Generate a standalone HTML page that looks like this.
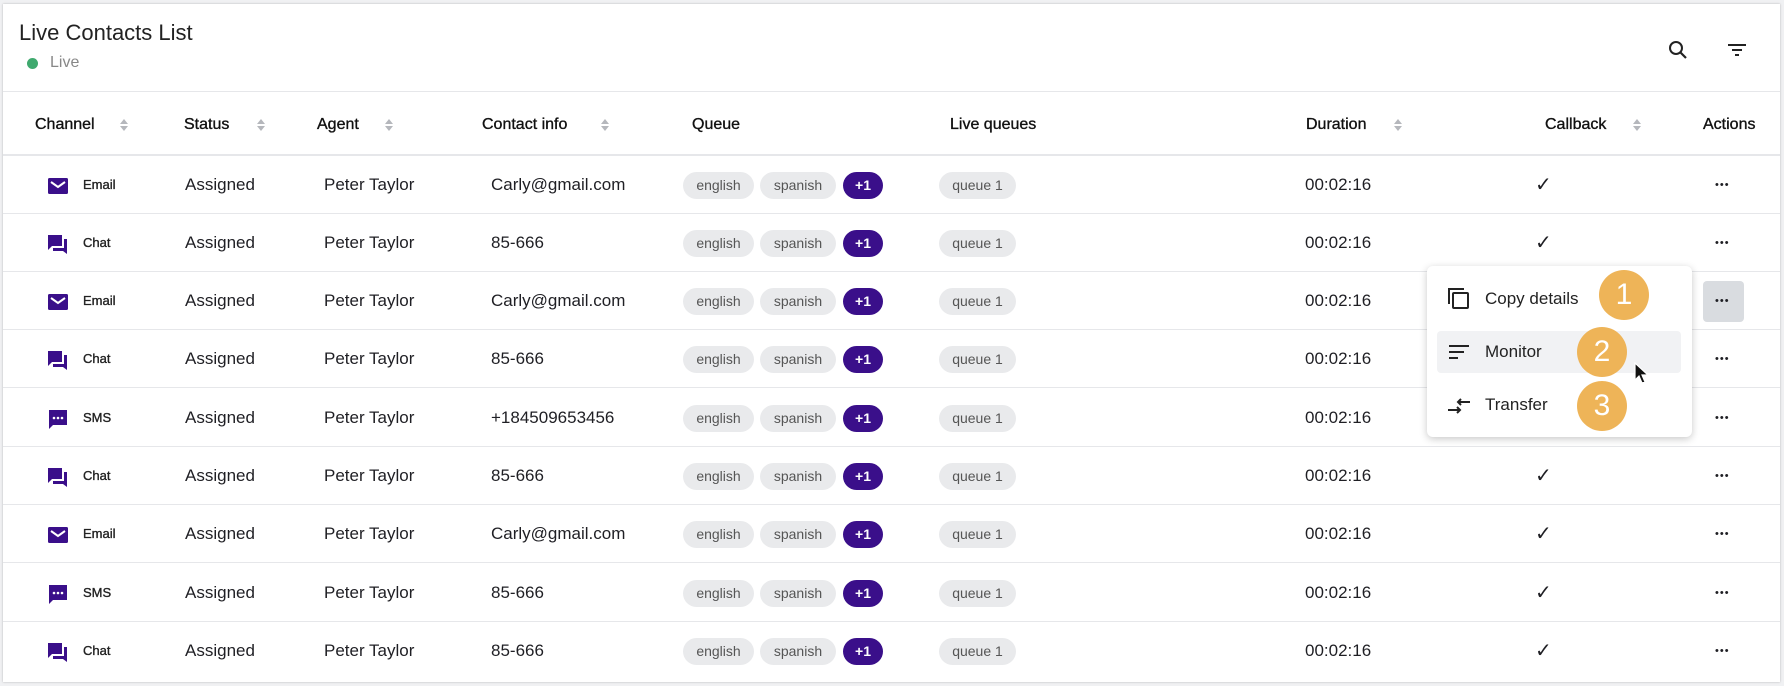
<!DOCTYPE html>
<html><head><meta charset="utf-8"><style>
*{box-sizing:border-box;margin:0;padding:0}
body{width:1784px;height:686px;background:#f0f1f3;font-family:"Liberation Sans",Arial,sans-serif;color:#1f1f24;position:relative;overflow:hidden}
.card{position:absolute;left:3px;top:4px;width:1777px;height:678px;background:#fff;box-shadow:0 0 2px rgba(0,0,0,.25)}
.a{position:absolute;white-space:nowrap}
.hl{position:absolute;left:0;right:0;height:1px;background:#e6e7ea}
.th{position:absolute;top:112px;font-size:16px;color:#111;-webkit-text-stroke:0.35px #111}
.sort{position:absolute;top:114px;width:8px;height:14px}
.row{position:absolute;left:0;width:1777px;height:58px;border-bottom:1px solid #e6e7ea}
.row>div{position:absolute;top:0;line-height:58px;font-size:17px;white-space:nowrap}
.ch{font-size:13px!important;color:#222;-webkit-text-stroke:0.35px #222}
.ic{position:absolute;top:19px!important;width:22px;height:22px}
.chip{top:16px!important;height:27px;line-height:27px!important;border-radius:14px;background:#e9eaec;color:#555;font-size:14px!important;text-align:center}
.plus{background:#3a0f8a;color:#fff;font-weight:bold}
.dots{font-size:11px!important;letter-spacing:1px}
.badge{position:absolute;width:50px;height:50px;border-radius:50%;background:#eeb458;color:#fff;font-size:30px;text-align:center;line-height:50px}
</style></head><body>
<div class="card">
<div class="a" style="left:16px;top:16px;font-size:22px;color:#222">Live Contacts List</div>
<div class="a" style="left:24px;top:54px;width:11px;height:11px;border-radius:50%;background:#3fa96e"></div>
<div class="a" style="left:47px;top:50px;font-size:16px;color:#888">Live</div>
<svg class="a" style="left:1663px;top:34px" width="24" height="24" viewBox="0 0 24 24"><circle cx="10" cy="10" r="6" fill="none" stroke="#222" stroke-width="2"/><path d="M14.5 14.5L20 20" stroke="#222" stroke-width="2.2"/></svg>
<svg class="a" style="left:1722px;top:34px" width="24" height="24" viewBox="0 0 24 24"><path d="M3 7h18M7 12h10M10 17h4" stroke="#222" stroke-width="2"/></svg>
<div class="hl" style="top:87px"></div>
<div class="th" style="left:32px">Channel</div>
<div class="th" style="left:181px">Status</div>
<div class="th" style="left:314px">Agent</div>
<div class="th" style="left:479px">Contact info</div>
<div class="th" style="left:689px">Queue</div>
<div class="th" style="left:947px">Live queues</div>
<div class="th" style="left:1303px">Duration</div>
<div class="th" style="left:1542px">Callback</div>
<div class="th" style="left:1700px">Actions</div>
<svg class="sort" style="left:117px" viewBox="0 0 8 14"><path d="M0 6L4 1L8 6ZM0 8L4 13L8 8Z" fill="#b5b7bc"/></svg>
<svg class="sort" style="left:254px" viewBox="0 0 8 14"><path d="M0 6L4 1L8 6ZM0 8L4 13L8 8Z" fill="#b5b7bc"/></svg>
<svg class="sort" style="left:382px" viewBox="0 0 8 14"><path d="M0 6L4 1L8 6ZM0 8L4 13L8 8Z" fill="#b5b7bc"/></svg>
<svg class="sort" style="left:598px" viewBox="0 0 8 14"><path d="M0 6L4 1L8 6ZM0 8L4 13L8 8Z" fill="#b5b7bc"/></svg>
<svg class="sort" style="left:1391px" viewBox="0 0 8 14"><path d="M0 6L4 1L8 6ZM0 8L4 13L8 8Z" fill="#b5b7bc"/></svg>
<svg class="sort" style="left:1630px" viewBox="0 0 8 14"><path d="M0 6L4 1L8 6ZM0 8L4 13L8 8Z" fill="#b5b7bc"/></svg>
<div class="hl" style="top:150px;height:2px"></div>

<div class="row" style="top:152px">
<svg class="ic" style="left:44px" viewBox="0 0 22 22"><rect x="1" y="3" width="20" height="16" rx="1.5" fill="#3a0f8a"/><path d="M4 7l7 5 7-5" stroke="#fff" stroke-width="2" fill="none"/></svg>
<div class="ch" style="left:80px">Email</div><div style="left:182px">Assigned</div><div style="left:321px">Peter Taylor</div><div style="left:488px">Carly@gmail.com</div>
<div class="chip" style="left:680px;width:71px">english</div><div class="chip" style="left:757px;width:76px">spanish</div><div class="chip plus" style="left:840px;width:40px">+1</div><div class="chip" style="left:936px;width:77px">queue 1</div>
<div style="left:1302px">00:02:16</div><div style="left:1532px;font-size:20px">✓</div><div class="dots" style="left:1712px">•••</div></div>

<div class="row" style="top:210px">
<svg class="ic" style="left:44px" viewBox="0 0 22 22"><path d="M1 2h14v11H5l-4 4Z" fill="#3a0f8a"/><path d="M17 6h3v15l-4-3H6v-3h11Z" fill="#3a0f8a"/></svg>
<div class="ch" style="left:80px">Chat</div><div style="left:182px">Assigned</div><div style="left:321px">Peter Taylor</div><div style="left:488px">85-666</div>
<div class="chip" style="left:680px;width:71px">english</div><div class="chip" style="left:757px;width:76px">spanish</div><div class="chip plus" style="left:840px;width:40px">+1</div><div class="chip" style="left:936px;width:77px">queue 1</div>
<div style="left:1302px">00:02:16</div><div style="left:1532px;font-size:20px">✓</div><div class="dots" style="left:1712px">•••</div></div>

<div class="row" style="top:268px">
<svg class="ic" style="left:44px" viewBox="0 0 22 22"><rect x="1" y="3" width="20" height="16" rx="1.5" fill="#3a0f8a"/><path d="M4 7l7 5 7-5" stroke="#fff" stroke-width="2" fill="none"/></svg>
<div class="ch" style="left:80px">Email</div><div style="left:182px">Assigned</div><div style="left:321px">Peter Taylor</div><div style="left:488px">Carly@gmail.com</div>
<div class="chip" style="left:680px;width:71px">english</div><div class="chip" style="left:757px;width:76px">spanish</div><div class="chip plus" style="left:840px;width:40px">+1</div><div class="chip" style="left:936px;width:77px">queue 1</div>
<div style="left:1302px">00:02:16</div>
<div style="left:1700px;top:9px;width:41px;height:41px;border-radius:4px;background:#d9dce0"></div><div class="dots" style="left:1712px">•••</div></div>

<div class="row" style="top:326px">
<svg class="ic" style="left:44px" viewBox="0 0 22 22"><path d="M1 2h14v11H5l-4 4Z" fill="#3a0f8a"/><path d="M17 6h3v15l-4-3H6v-3h11Z" fill="#3a0f8a"/></svg>
<div class="ch" style="left:80px">Chat</div><div style="left:182px">Assigned</div><div style="left:321px">Peter Taylor</div><div style="left:488px">85-666</div>
<div class="chip" style="left:680px;width:71px">english</div><div class="chip" style="left:757px;width:76px">spanish</div><div class="chip plus" style="left:840px;width:40px">+1</div><div class="chip" style="left:936px;width:77px">queue 1</div>
<div style="left:1302px">00:02:16</div><div class="dots" style="left:1712px">•••</div></div>

<div class="row" style="top:385px">
<svg class="ic" style="left:44px" viewBox="0 0 22 22"><path d="M2 2h18v15H6l-4 4Z" fill="#3a0f8a"/><circle cx="7" cy="10" r="1.3" fill="#fff"/><circle cx="11" cy="10" r="1.3" fill="#fff"/><circle cx="15" cy="10" r="1.3" fill="#fff"/></svg>
<div class="ch" style="left:80px">SMS</div><div style="left:182px">Assigned</div><div style="left:321px">Peter Taylor</div><div style="left:488px">+184509653456</div>
<div class="chip" style="left:680px;width:71px">english</div><div class="chip" style="left:757px;width:76px">spanish</div><div class="chip plus" style="left:840px;width:40px">+1</div><div class="chip" style="left:936px;width:77px">queue 1</div>
<div style="left:1302px">00:02:16</div><div class="dots" style="left:1712px">•••</div></div>

<div class="row" style="top:443px">
<svg class="ic" style="left:44px" viewBox="0 0 22 22"><path d="M1 2h14v11H5l-4 4Z" fill="#3a0f8a"/><path d="M17 6h3v15l-4-3H6v-3h11Z" fill="#3a0f8a"/></svg>
<div class="ch" style="left:80px">Chat</div><div style="left:182px">Assigned</div><div style="left:321px">Peter Taylor</div><div style="left:488px">85-666</div>
<div class="chip" style="left:680px;width:71px">english</div><div class="chip" style="left:757px;width:76px">spanish</div><div class="chip plus" style="left:840px;width:40px">+1</div><div class="chip" style="left:936px;width:77px">queue 1</div>
<div style="left:1302px">00:02:16</div><div style="left:1532px;font-size:20px">✓</div><div class="dots" style="left:1712px">•••</div></div>

<div class="row" style="top:501px">
<svg class="ic" style="left:44px" viewBox="0 0 22 22"><rect x="1" y="3" width="20" height="16" rx="1.5" fill="#3a0f8a"/><path d="M4 7l7 5 7-5" stroke="#fff" stroke-width="2" fill="none"/></svg>
<div class="ch" style="left:80px">Email</div><div style="left:182px">Assigned</div><div style="left:321px">Peter Taylor</div><div style="left:488px">Carly@gmail.com</div>
<div class="chip" style="left:680px;width:71px">english</div><div class="chip" style="left:757px;width:76px">spanish</div><div class="chip plus" style="left:840px;width:40px">+1</div><div class="chip" style="left:936px;width:77px">queue 1</div>
<div style="left:1302px">00:02:16</div><div style="left:1532px;font-size:20px">✓</div><div class="dots" style="left:1712px">•••</div></div>

<div class="row" style="top:560px">
<svg class="ic" style="left:44px" viewBox="0 0 22 22"><path d="M2 2h18v15H6l-4 4Z" fill="#3a0f8a"/><circle cx="7" cy="10" r="1.3" fill="#fff"/><circle cx="11" cy="10" r="1.3" fill="#fff"/><circle cx="15" cy="10" r="1.3" fill="#fff"/></svg>
<div class="ch" style="left:80px">SMS</div><div style="left:182px">Assigned</div><div style="left:321px">Peter Taylor</div><div style="left:488px">85-666</div>
<div class="chip" style="left:680px;width:71px">english</div><div class="chip" style="left:757px;width:76px">spanish</div><div class="chip plus" style="left:840px;width:40px">+1</div><div class="chip" style="left:936px;width:77px">queue 1</div>
<div style="left:1302px">00:02:16</div><div style="left:1532px;font-size:20px">✓</div><div class="dots" style="left:1712px">•••</div></div>

<div class="row" style="top:618px;border-bottom:none">
<svg class="ic" style="left:44px" viewBox="0 0 22 22"><path d="M1 2h14v11H5l-4 4Z" fill="#3a0f8a"/><path d="M17 6h3v15l-4-3H6v-3h11Z" fill="#3a0f8a"/></svg>
<div class="ch" style="left:80px">Chat</div><div style="left:182px">Assigned</div><div style="left:321px">Peter Taylor</div><div style="left:488px">85-666</div>
<div class="chip" style="left:680px;width:71px">english</div><div class="chip" style="left:757px;width:76px">spanish</div><div class="chip plus" style="left:840px;width:40px">+1</div><div class="chip" style="left:936px;width:77px">queue 1</div>
<div style="left:1302px">00:02:16</div><div style="left:1532px;font-size:20px">✓</div><div class="dots" style="left:1712px">•••</div></div>
</div>

<div class="a" style="left:1427px;top:266px;width:265px;height:171px;background:#fff;border-radius:6px;box-shadow:0 2px 8px rgba(0,0,0,.22)"></div>
<div class="a" style="left:1437px;top:331px;width:244px;height:42px;background:#f1f2f4;border-radius:4px"></div>
<svg class="a" style="left:1447px;top:287px" width="24" height="24" viewBox="0 0 24 24"><path d="M2 17V2h15" stroke="#222" stroke-width="2" fill="none"/><rect x="6" y="6" width="15" height="15" rx="1" stroke="#222" stroke-width="2" fill="none"/></svg>
<div class="a" style="left:1485px;top:289px;font-size:17px;color:#222">Copy details</div>
<svg class="a" style="left:1447px;top:340px" width="24" height="24" viewBox="0 0 24 24"><path d="M2 6h20M2 12h15M2 18h9" stroke="#222" stroke-width="2"/></svg>
<div class="a" style="left:1485px;top:342px;font-size:17px;color:#222">Monitor</div>
<svg class="a" style="left:1447px;top:394px" width="24" height="24" viewBox="0 0 24 24"><path d="M1 16h12M10 13l3 3-3 3M23 8H11M14 5l-3 3 3 3" stroke="#222" stroke-width="2" fill="none"/></svg>
<div class="a" style="left:1485px;top:395px;font-size:17px;color:#222">Transfer</div>
<div class="badge" style="left:1599px;top:270px">1</div>
<div class="badge" style="left:1577px;top:327px">2</div>
<div class="badge" style="left:1577px;top:381px">3</div>
<svg class="a" style="left:1634px;top:362px" width="16" height="24" viewBox="0 0 16 24"><path d="M1 1v17l4-4 3 7 3-1-3-7h6Z" fill="#111" stroke="#fff" stroke-width="1.2"/></svg>
</body></html>
